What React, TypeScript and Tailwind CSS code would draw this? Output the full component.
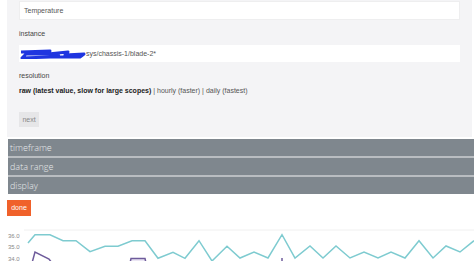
import React from "react";

// teal series, pixel coords inside the chart svg (top = page y 222)
const TEAL: [number, number][] = [
  [28, 244], [35, 235.7], [50, 235.7], [63, 241.7], [76, 241.7], [90, 252.7],
  [105, 247.3], [118, 247.3], [132, 241.7], [145, 241.7], [158, 259.3],
  [173, 253.3], [185, 259.3], [199, 241.7], [212, 262], [227, 247.3],
  [240, 259], [254, 253], [268, 259], [282, 235.7], [295, 259], [310, 247],
  [323, 259], [336, 247], [350, 259], [364, 253], [378, 259], [391, 253],
  [405, 259], [419, 241.7], [433, 259], [446, 247], [460, 253], [474, 241.7],
];

const pts = (list: [number, number][]) =>
  list.map(([x, y]) => `${x},${y - 222}`).join(" ");

function Bar({ label }: { label: string }) {
  return (
    <div className="flex h-[17px] items-center bg-[#7f878e] pl-[2px] font-['Open_Sans',sans-serif] text-[9px] font-light text-[#e8eaec]">
      {label}
    </div>
  );
}

export default function App() {
  return (
    <div className="h-[262px] w-[474px] overflow-hidden bg-white font-['Liberation_Sans',Arial,sans-serif] text-[7px] leading-[10px]">
      {/* step panel */}
      <div className="ml-[7px] mr-[2px] bg-[#f4f4f6] px-[12px] pb-[10px] pt-[1px]">
        <div className="flex h-[19px] items-center border border-[#eeeeef] bg-white px-[4px] text-[#555]">
          Temperature
        </div>

        <div className="mt-[9px] text-[#444]">instance</div>
        <div className="mt-[6px] flex h-[17px] items-center bg-white pl-[1px] text-[#555]">
          <svg width="66" height="10" viewBox="0 0 66 10" className="shrink-0">
            <path
              d="M1 3 L30 2 L28 5 L48 3 L45 6 L64 5 L60 8 L30 8 L2 9 L6 5 L40 5"
              fill="none"
              stroke="#1f35e0"
              strokeWidth="3"
              strokeLinejoin="round"
            />
          </svg>
          <span>sys/chassis-1/blade-2*</span>
        </div>

        <div className="mt-[9px] text-[#444]">resolution</div>
        <div className="mt-[5px] text-[#555]">
          <span className="font-bold text-[#222]">raw (latest value, slow for large scopes)</span>
          {" | hourly (faster) | daily (fastest)"}
        </div>

        <button className="mt-[16px] flex h-[15px] w-[20px] items-center justify-center bg-[#e6e6e8] text-[7px] text-[#888]">
          next
        </button>
      </div>

      {/* collapsed sections */}
      <div className="ml-[8px] mt-[2px] flex flex-col gap-[2px] bg-[#b9bdc1]">
        <Bar label="timeframe" />
        <Bar label="data range" />
        <Bar label="display" />
      </div>

      <button className="ml-[7px] mt-[6px] flex h-[16px] w-[24px] items-center justify-center bg-[#f0612a] text-[7px] text-white">
        done
      </button>

      {/* chart */}
      <svg width="474" height="40" className="mt-[5px] block">
        <line x1="24" y1="9" x2="474" y2="9" stroke="#f0f0f0" strokeWidth="1" />
        <text x="8" y="16.5" fontSize="6" fill="#888">36.0</text>
        <text x="8" y="28" fontSize="6" fill="#888">35.0</text>
        <text x="8" y="39.5" fontSize="6" fill="#888">34.0</text>
        <polyline points={pts(TEAL)} fill="none" stroke="#7ecbd0" strokeWidth="1.5" />
        <polyline points="32,42 35,31 49,38 52,42" fill="none" stroke="#6e5b9b" strokeWidth="1.5" />
        <polyline
          points="130,42 131,37.5 145,37.5 146,42"
          fill="#ebe6f4"
          stroke="#6e5b9b"
          strokeWidth="1.5"
        />
        <line x1="282" y1="37" x2="282" y2="42" stroke="#6e5b9b" strokeWidth="1.5" />
      </svg>
    </div>
  );
}
